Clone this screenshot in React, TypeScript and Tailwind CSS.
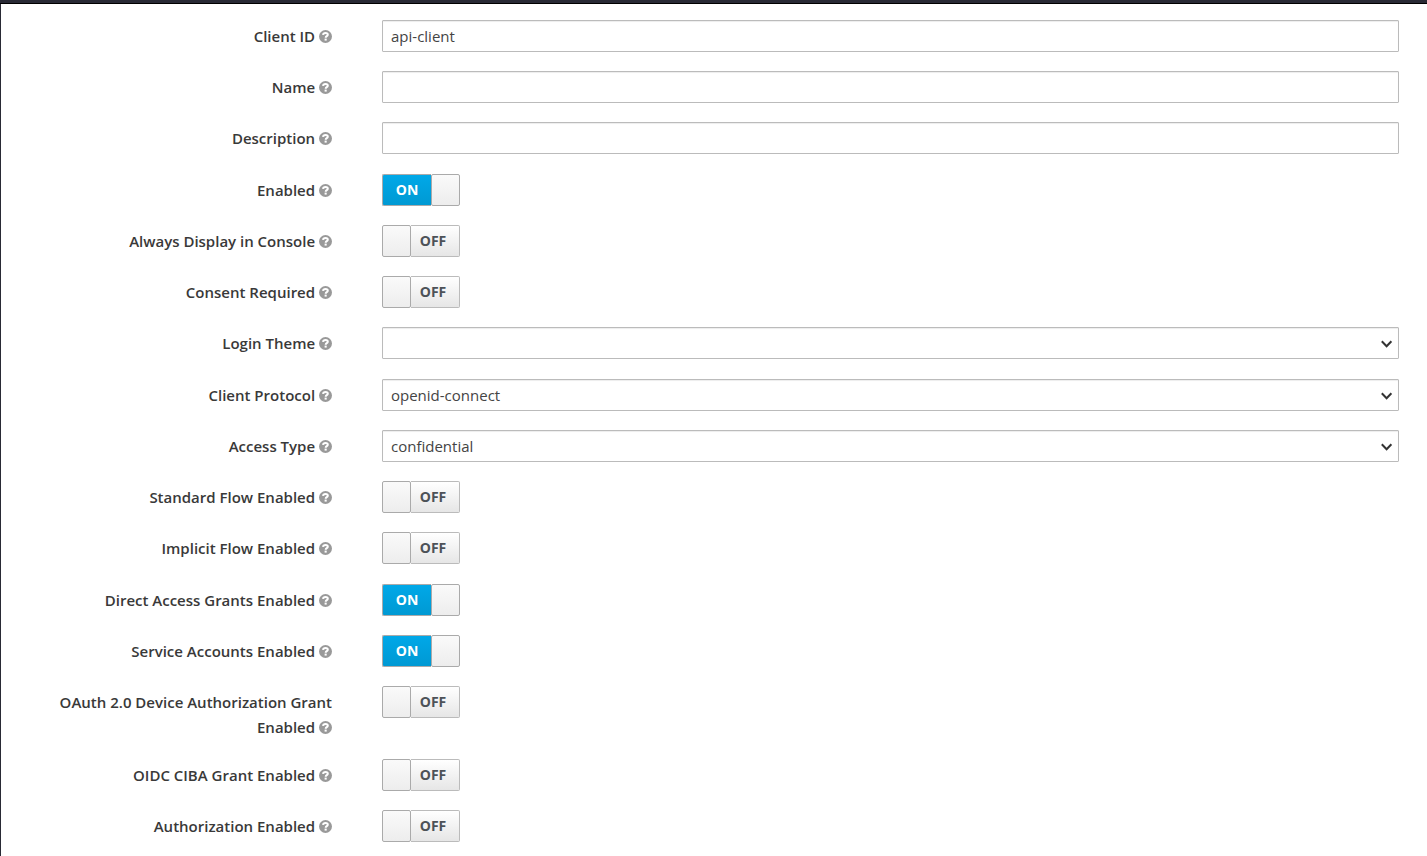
import React, { useState } from "react";

type Field =
  | { kind: "text"; id: string; label: string; value: string }
  | { kind: "select"; id: string; label: string; options: string[] }
  | { kind: "toggle"; id: string; label: string; on: boolean };

const sections: Field[][] = [
  [
    { kind: "text", id: "clientId", label: "Client ID", value: "api-client" },
    { kind: "text", id: "name", label: "Name", value: "" },
    { kind: "text", id: "description", label: "Description", value: "" },
  ],
  [
    { kind: "toggle", id: "enabled", label: "Enabled", on: true },
    { kind: "toggle", id: "alwaysDisplay", label: "Always Display in Console", on: false },
    { kind: "toggle", id: "consent", label: "Consent Required", on: false },
    { kind: "select", id: "loginTheme", label: "Login Theme", options: [""] },
  ],
  [
    { kind: "select", id: "protocol", label: "Client Protocol", options: ["openid-connect"] },
    { kind: "select", id: "accessType", label: "Access Type", options: ["confidential"] },
    { kind: "toggle", id: "standardFlow", label: "Standard Flow Enabled", on: false },
    { kind: "toggle", id: "implicitFlow", label: "Implicit Flow Enabled", on: false },
  ],
  [
    { kind: "toggle", id: "directAccess", label: "Direct Access Grants Enabled", on: true },
    { kind: "toggle", id: "serviceAccounts", label: "Service Accounts Enabled", on: true },
    { kind: "toggle", id: "deviceGrant", label: "OAuth 2.0 Device Authorization Grant Enabled", on: false },
    { kind: "toggle", id: "ciba", label: "OIDC CIBA Grant Enabled", on: false },
    { kind: "toggle", id: "authorization", label: "Authorization Enabled", on: false },
  ],
];

const controlClass =
  "block h-8 w-full rounded-[1px] border border-[#bbb] bg-white px-2 text-[15px] text-[#444] shadow-[inset_0_1px_1px_rgba(0,0,0,0.075)]";

function HelpIcon() {
  return (
    <svg viewBox="0 0 13 13" className="inline size-[13px] align-[-1px]" fill="none">
      <circle cx="6.5" cy="6.5" r="6.5" fill="#999" />
      <path
        d="M4 4.9C4.2 3.5 5.2 2.9 6.5 2.9c1.4 0 2.3.8 2.3 1.8 0 1.5-2.1 1.4-2.1 3"
        stroke="#fff"
        strokeWidth="2"
      />
      <rect x="5.6" y="8.6" width="2.1" height="2" fill="#fff" />
    </svg>
  );
}

function Toggle({ id, initial }: { id: string; initial: boolean }) {
  const [on, setOn] = useState(initial);
  const knob = (
    <span className="h-8 w-[29px] rounded-[2px] border border-[#aaa] bg-linear-to-b from-[#fafafa] to-[#ededed]" />
  );

  return (
    <button
      id={id}
      type="button"
      role="switch"
      aria-checked={on}
      onClick={() => setOn(!on)}
      className="flex h-8 w-[78px] text-sm font-bold"
    >
      {!on && knob}
      {on ? (
        <span className="flex h-8 flex-1 items-center justify-center rounded-l-[2px] border border-r-0 border-[#aaa] bg-linear-to-b from-[#00a8e8] to-[#0099d3] text-white">
          ON
        </span>
      ) : (
        <span className="flex h-8 flex-1 items-center justify-center rounded-r-[2px] border border-l-0 border-[#bbb] bg-linear-to-b from-white to-[#e6e6e6] pr-1 text-[#4d5258]">
          OFF
        </span>
      )}
      {on && knob}
    </button>
  );
}

function Control({ field }: { field: Field }) {
  if (field.kind === "toggle") {
    return <Toggle id={field.id} initial={field.on} />;
  }
  if (field.kind === "text") {
    return <input id={field.id} type="text" defaultValue={field.value} className={controlClass} />;
  }
  return (
    <div className="relative">
      <select id={field.id} className={`${controlClass} appearance-none`}>
        {field.options.map((option) => (
          <option key={option}>{option}</option>
        ))}
      </select>
      <svg
        viewBox="0 0 12 8"
        className="pointer-events-none absolute top-[13px] right-[6px] h-2 w-3"
        fill="none"
        stroke="#333"
        strokeWidth="2"
      >
        <path d="M.8 1.2 5.6 6.2 10.4 1.2" />
      </svg>
    </div>
  );
}

function FormRow({ field }: { field: Field }) {
  return (
    <div className="grid grid-cols-[303px_1fr] gap-x-[50px]">
      <label
        htmlFor={field.id}
        className="pt-1 text-right text-[15px] leading-[25px] font-semibold text-[#393939]"
      >
        {field.label} <HelpIcon />
      </label>
      <Control field={field} />
    </div>
  );
}

export default function App() {
  return (
    <div className="bg-white font-['Open_Sans',sans-serif]">
      <div className="h-1 border-b border-black bg-[#292a35]" />
      <form className="flex flex-col gap-5 border-l border-[#292a35] pt-4 pr-7 pb-[14px] pl-7">
        {sections.map((fields, i) => (
          <div key={i} className="flex flex-col gap-[19px]">
            {fields.map((field) => (
              <FormRow key={field.id} field={field} />
            ))}
          </div>
        ))}
      </form>
    </div>
  );
}
